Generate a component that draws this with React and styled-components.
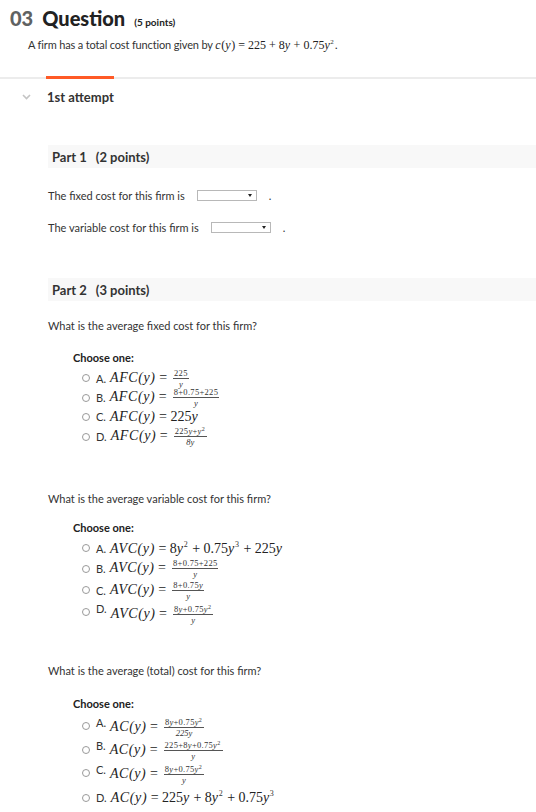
import React from "react";
import styled, { createGlobalStyle } from "styled-components";

const Global = createGlobalStyle`
  html, body { margin: 0; padding: 0; background: #fff; }
  body { font-family: Lato, "Open Sans", sans-serif; color: #333; }
`;

const Page = styled.div`
  width: 536px;
  padding-bottom: 20px;
`;

const Header = styled.div`
  padding: 6px 10px 0;
`;

const Title = styled.h1`
  margin: 0;
  display: flex;
  align-items: baseline;
  gap: 9px;
  font-size: 20px;
  font-weight: 900;
  color: #222;
`;

const Num = styled.span`
  color: #5f6262;
`;

const Points = styled.span`
  font-size: 10px;
  font-weight: 700;
`;

const Prompt = styled.p`
  margin: 8px 0 0 18px;
  font-size: 11px;
  letter-spacing: -0.15px;
`;

const M = styled.span`
  font-family: "Liberation Serif", "Times New Roman", serif;
  font-size: ${(p) => p.size || 14}px;
  font-style: ${(p) => (p.roman ? "normal" : "italic")};
  letter-spacing: ${(p) => (p.roman ? 0 : 0.6)}px;
  color: #222;
  white-space: pre;
`;

const Tabs = styled.div`
  margin-top: 24px;
  height: 2px;
  background: #ececec;
  position: relative;
`;

const TabMark = styled.div`
  position: absolute;
  left: 46px;
  top: -1px;
  width: 68px;
  height: 3px;
  background: #ff5a26;
`;

const AttemptRow = styled.div`
  display: flex;
  align-items: center;
  gap: 16px;
  padding: 10px 0 0 22px;
  font-size: 13px;
  font-weight: 700;
  color: #333;
`;

const Section = styled.section`
  margin: ${(p) => p.top}px 0 0 48px;
`;

const PartBand = styled.div`
  height: 23px;
  display: flex;
  align-items: center;
  padding-left: 4px;
  background: #f8f8f8;
  font-size: 13px;
  font-weight: 700;
  color: #333;
  & span + span { margin-left: 9px; }
`;

const Line = styled.div`
  display: flex;
  align-items: center;
  font-size: 11px;
  margin-top: ${(p) => p.top}px;
`;

const Select = styled.div`
  width: 58px;
  height: 9px;
  border: 1px solid #b8b8b8;
  margin: 0 12px 0 12px;
  position: relative;
  background: #fff;
  &::after {
    content: "";
    position: absolute;
    right: 4px;
    top: 3px;
    border-left: 2px solid transparent;
    border-right: 2px solid transparent;
    border-top: 3px solid #222;
  }
`;

const Question = styled.p`
  margin: ${(p) => p.top}px 0 0;
  font-size: 11px;
`;

const Choose = styled.div`
  margin: ${(p) => p.top}px 0 0 25px;
  font-size: 11px;
  font-weight: 700;
  color: #222;
`;

const Options = styled.div`
  margin: ${(p) => p.top || 6}px 0 0 34px;
  display: flex;
  flex-direction: column;
`;

const Option = styled.label`
  display: flex;
  align-items: center;
  height: ${(p) => p.h || 19}px;
  font-size: 11px;
`;

const Radio = styled.span`
  width: 6px;
  height: 6px;
  border: 1px solid #9a9a9a;
  border-radius: 50%;
  margin-right: 6px;
  flex: none;
`;

const Letter = styled.span`
  margin-right: 4px;
  position: relative;
  top: ${(p) => (p.raised ? -4 : 0)}px;
`;

const Expr = styled.span`
  display: inline-block;
  white-space: nowrap;
  font-size: 14px;
  line-height: 16px;
  position: relative;
  top: ${(p) => p.drop || 0}px;
`;

const FracBox = styled.span`
  display: inline-flex;
  flex-direction: column;
  vertical-align: middle;
  margin-left: 6px;
  font-family: "Liberation Serif", "Times New Roman", serif;
  font-size: 8.5px;
  line-height: 10px;
  color: #333;
  text-align: center;
`;

const Numer = styled.span`
  border-bottom: 1px solid #555;
  padding: 0 1px;
  letter-spacing: 0.3px;
`;

const Denom = styled.span`
  font-style: italic;
`;

const Sup = styled.sup`
  font-family: "Liberation Serif", "Times New Roman", serif;
  font-size: ${(p) => p.size || 8}px;
  vertical-align: ${(p) => p.up || 6}px;
  line-height: 0;
  margin-right: 1px;
`;

const Frac = ({ n, d }) => (
  <FracBox>
    <Numer>{n}</Numer>
    <Denom>{d}</Denom>
  </FracBox>
);

const I = styled.i``;

const Chevron = () => (
  <svg width="9" height="6" viewBox="0 0 9 6">
    <path d="M1 1l3.5 3.5L8 1" fill="none" stroke="#c4c4c4" strokeWidth="1.6" />
  </svg>
);

const Lhs = ({ f }) => (
  <>
    <M>{f}(y)</M>
    <M roman> =</M>
  </>
);

const sq = <Sup size={6} up={3}>2</Sup>;

const afc = [
  { l: "A.", e: <><Lhs f="AFC" /><Frac n="225" d="y" /></>, h: 20 },
  { l: "B.", e: <><Lhs f="AFC" /><Frac n="8+0.75+225" d="y" /></>, h: 19 },
  { l: "C.", e: <><Lhs f="AFC" /><M roman> 225</M><M>y</M></>, h: 19 },
  { l: "D.", e: <><Lhs f="AFC" /><Frac n={<>225<I>y</I>+<I>y</I>{sq}</>} d="8y" /></>, h: 21 },
];

const avc = [
  { l: "A.", e: <><Lhs f="AVC" /><M roman> 8</M><M>y</M><Sup>2</Sup><M roman> + 0.75</M><M>y</M><Sup>3</Sup><M roman> + 225</M><M>y</M></>, h: 20 },
  { l: "B.", e: <><Lhs f="AVC" /><Frac n="8+0.75+225" d="y" /></>, h: 21 },
  { l: "C.", e: <><Lhs f="AVC" /><Frac n={<>8+0.75<I>y</I></>} d="y" /></>, h: 22 },
  { l: "D.", e: <><Lhs f="AVC" /><Frac n={<>8<I>y</I>+0.75<I>y</I>{sq}</>} d="y" /></>, h: 22, raised: true, drop: 2 },
];

const ac = [
  { l: "A.", e: <><Lhs f="AC" /><Frac n={<>8<I>y</I>+0.75<I>y</I>{sq}</>} d="225y" /></>, h: 24, raised: true, drop: 1 },
  { l: "B.", e: <><Lhs f="AC" /><Frac n={<>225+8<I>y</I>+0.75<I>y</I>{sq}</>} d="y" /></>, h: 23, raised: true, drop: 1 },
  { l: "C.", e: <><Lhs f="AC" /><Frac n={<>8<I>y</I>+0.75<I>y</I>{sq}</>} d="y" /></>, h: 24, raised: true, drop: 1 },
  { l: "D.", e: <><Lhs f="AC" /><M roman> 225</M><M>y</M><M roman> + 8</M><M>y</M><Sup>2</Sup><M roman> + 0.75</M><M>y</M><Sup>3</Sup></>, h: 25 },
];

const OptionList = ({ items, top }) => (
  <Options top={top}>
    {items.map((o) => (
      <Option key={o.l} h={o.h}>
        <Radio />
        <Letter raised={o.raised}>{o.l}</Letter>
        <Expr drop={o.drop}>{o.e}</Expr>
      </Option>
    ))}
  </Options>
);

export default function App() {
  return (
    <Page>
      <Global />
      <Header>
        <Title>
          <Num>03</Num>
          <span>Question</span>
          <Points>(5 points)</Points>
        </Title>
        <Prompt>
          A firm has a total cost function given by{" "}
          <M size={12}>c</M><M size={12} roman>(</M><M size={12}>y</M>
          <M size={12} roman>) = 225 + 8</M><M size={12}>y</M>
          <M size={12} roman> + 0.75</M><M size={12}>y</M><Sup size={7} up={5}>2</Sup>
          <M size={12} roman>.</M>
        </Prompt>
      </Header>

      <Tabs>
        <TabMark />
      </Tabs>

      <AttemptRow>
        <Chevron />
        <span>1st attempt</span>
      </AttemptRow>

      <Section top={40}>
        <PartBand>
          <span>Part 1</span>
          <span>(2 points)</span>
        </PartBand>
        <Line top={21}>
          The fixed cost for this firm is <Select /> .
        </Line>
        <Line top={19}>
          The variable cost for this firm is <Select /> .
        </Line>
      </Section>

      <Section top={44}>
        <PartBand>
          <span>Part 2</span>
          <span>(3 points)</span>
        </PartBand>
        <Question top={18}>What is the average fixed cost for this firm?</Question>
        <Choose top={19}>Choose one:</Choose>
        <OptionList items={afc} top={4} />

        <Question top={45}>What is the average variable cost for this firm?</Question>
        <Choose top={16}>Choose one:</Choose>
        <OptionList items={avc} top={4} />

        <Question top={41}>What is the average (total) cost for this firm?</Question>
        <Choose top={20}>Choose one:</Choose>
        <OptionList items={ac} top={4} />
      </Section>
    </Page>
  );
}
